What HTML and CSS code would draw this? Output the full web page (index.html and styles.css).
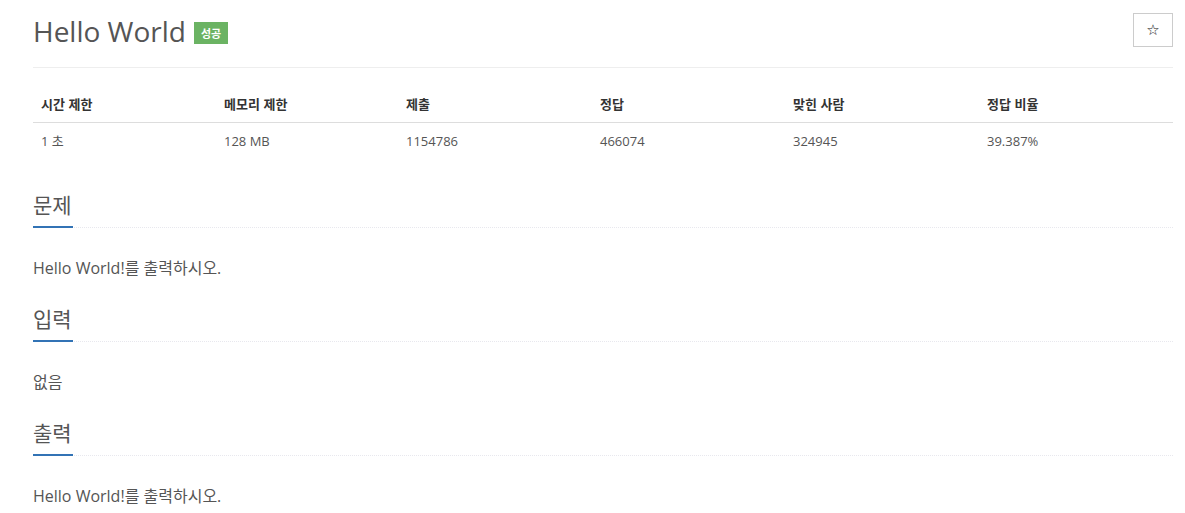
FILE: index.html
```html
<!DOCTYPE html>
<html lang="ko">
<head>
<meta charset="utf-8">
<link rel="stylesheet" href="styles.css">
<title>Hello World</title>
</head>
<body>
<div class="page">
  <div class="page-header">
    <h1 class="title">Hello World <span class="label">성공</span></h1>
    <button class="star-btn" type="button">&#9734;</button>
  </div>
  <table class="info">
    <thead>
      <tr>
        <th class="c1">시간 제한</th>
        <th class="c2">메모리 제한</th>
        <th class="c3">제출</th>
        <th class="c4">정답</th>
        <th class="c5">맞힌 사람</th>
        <th class="c6">정답 비율</th>
      </tr>
    </thead>
    <tbody>
      <tr>
        <td>1 초</td>
        <td>128 MB</td>
        <td>1154786</td>
        <td>466074</td>
        <td>324945</td>
        <td>39.387%</td>
      </tr>
    </tbody>
  </table>
  <section class="sec">
    <div class="headline"><h2>문제</h2></div>
    <p class="body-text">Hello World!를 출력하시오.</p>
  </section>
  <section class="sec">
    <div class="headline"><h2>입력</h2></div>
    <p class="body-text">없음</p>
  </section>
  <section class="sec">
    <div class="headline"><h2>출력</h2></div>
    <p class="body-text">Hello World!를 출력하시오.</p>
  </section>
</div>
</body>
</html>
```
FILE: styles.css
```css
html, body {
  margin: 0;
  padding: 0;
  background: #fff;
}
body {
  font-family: "Open Sans", "Noto Sans CJK KR", sans-serif;
  color: #555;
  font-size: 13px;
}
.page {
  padding: 0 12px 0 33px;
}
.page-header {
  display: flex;
  justify-content: space-between;
  align-items: flex-start;
  padding-top: 13px;
  height: 54px;
  box-sizing: content-box;
  border-bottom: 1px solid #eee;
}
.title {
  margin: 0;
  font-weight: 400;
  font-size: 28px;
  line-height: 36px;
  color: #555;
  display: flex;
  align-items: center;
}
.label {
  display: inline-block;
  margin-left: 8px;
  margin-top: 4px;
  background: #6bb363;
  color: #fff;
  font-size: 11px;
  font-weight: 600;
  line-height: 22px;
  height: 22px;
  padding: 0 7px;
  font-family: "Noto Sans CJK KR", sans-serif;
}
.star-btn {
  width: 40px;
  height: 34px;
  border: 1px solid #ccc;
  background: #fff;
  border-radius: 0;
  color: #111;
  font-size: 15px;
  padding: 0;
  font-family: "DejaVu Sans", sans-serif;
}
.info {
  width: 100%;
  border-collapse: collapse;
  margin-top: 18px;
  table-layout: fixed;
}
.info th, .info td {
  box-sizing: border-box;
  text-align: left;
  padding: 8px;
  line-height: 20px;
  font-size: 13px;
  color: #333;
}
.info th {
  font-weight: 700;
  border-bottom: 1px solid #ddd;
  font-family: "Noto Sans CJK KR", sans-serif;
}
.info td {
  color: #555;
}
.c1 { width: 183px; }
.c2 { width: 182px; }
.c3 { width: 194px; }
.c4 { width: 193px; }
.c5 { width: 194px; }
.sec {
  margin-top: 15px;
}
.info + .sec {
  margin-top: 21px;
}
.headline {
  border-bottom: 1px dotted #e8e8ee;
  height: 48px;
  box-sizing: border-box;
}
.headline h2 {
  margin: 0;
  display: inline-block;
  font-weight: 400;
  font-size: 21px;
  line-height: 30px;
  padding-top: 9px;
  padding-bottom: 7px;
  color: #555;
  border-bottom: 2px solid #3273b5;
  width: 40px;
  font-family: "Noto Sans CJK KR", sans-serif;
}
.body-text {
  margin: 29px 0 0;
  font-size: 16px;
  line-height: 22px;
  color: #555;
}
```
